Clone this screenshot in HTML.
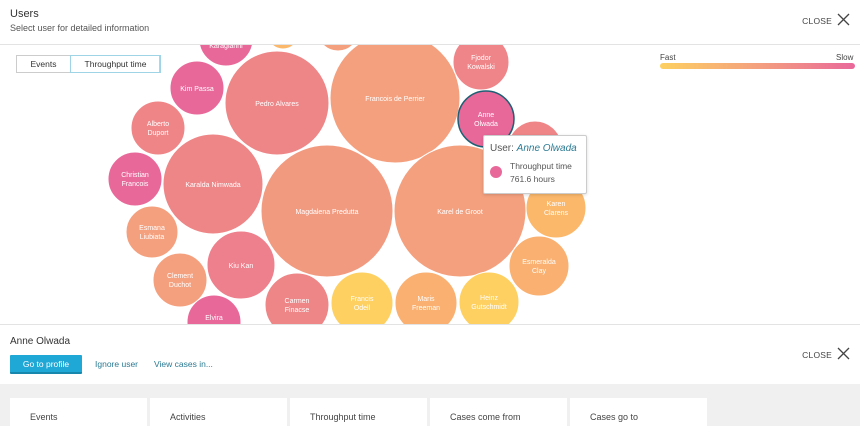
<!DOCTYPE html>
<html><head><style>
*{margin:0;padding:0;box-sizing:border-box}
body{width:860px;height:426px;overflow:hidden;background:#fff;font-family:"Liberation Sans",sans-serif;position:relative}
.abs{position:absolute}
.close{font-size:8.5px;color:#444;letter-spacing:.2px;width:40px;text-align:right}
.card{position:absolute;top:398px;width:137px;height:30px;background:#fff;font-size:9px;color:#444;padding:14px 0 0 20px}
</style></head><body>
<div class="abs" style="left:10px;top:8px;font-size:11px;color:#333">Users</div>
<div class="abs" style="left:10px;top:23px;font-size:9px;color:#555">Select user for detailed information</div>
<div class="abs close" style="left:792px;top:16px">CLOSE</div>
<svg class="abs" style="left:837px;top:13px" width="13" height="13"><path d="M1 1L12 12M12 1L1 12" stroke="#444" stroke-width="1.3"/></svg>
<div class="abs" style="left:0;top:44px;width:860px;height:1px;background:#e3e3e3"></div>

<svg class="abs" style="left:0;top:45px" width="860" height="279" viewBox="0 45 860 279" font-family="Liberation Sans, sans-serif" font-size="7" fill="#fff" text-anchor="middle">
<g stroke="#fff" stroke-width="1">
<circle cx="226" cy="39" r="27" fill="#e9689a"/>
<circle cx="283" cy="33" r="16" fill="#fbb86b"/>
<circle cx="338" cy="30" r="21" fill="#f4a07e"/>
<circle cx="443" cy="30" r="15" fill="#ee7f8c"/>
<circle cx="197" cy="88" r="27" fill="#e9689a"/>
<circle cx="277" cy="103" r="52" fill="#ee8587"/>
<circle cx="395" cy="98" r="65" fill="#f4a07e"/>
<circle cx="481" cy="62" r="28" fill="#ef8589"/>
<circle cx="158" cy="128" r="27" fill="#ef8587"/>
<circle cx="135" cy="179" r="27" fill="#e9689a"/>
<circle cx="213" cy="184" r="50" fill="#ee8587"/>
<circle cx="535" cy="148" r="27" fill="#ef8587"/>
<circle cx="327" cy="211" r="66" fill="#f29a80"/>
<circle cx="460" cy="211" r="66" fill="#f4a07e"/>
<circle cx="556" cy="208" r="30" fill="#fbb86b"/>
<circle cx="539" cy="266" r="30" fill="#f9b070"/>
<circle cx="152" cy="232" r="26" fill="#f4a07e"/>
<circle cx="241" cy="265" r="34" fill="#ee7f8c"/>
<circle cx="180" cy="280" r="27" fill="#f4a07e"/>
<circle cx="297" cy="305" r="32" fill="#ee8587"/>
<circle cx="362" cy="303" r="31" fill="#fdd061"/>
<circle cx="426" cy="303" r="31" fill="#f9b070"/>
<circle cx="489" cy="302" r="30" fill="#fdd061"/>
<circle cx="214" cy="322" r="27" fill="#e9689a"/>
</g>
<circle cx="486" cy="119" r="28" fill="#e9689a" stroke="#1e5f74" stroke-width="1.5"/>
<text x="226" y="48">Karagianni</text>
<text x="197" y="91">Kim Passa</text>
<text x="277" y="106">Pedro Alvares</text>
<text x="395" y="101">Francois de Perrier</text>
<text x="481" y="60">Fjodor</text><text x="481" y="69">Kowalski</text>
<text x="486" y="117">Anne</text><text x="486" y="126">Olwada</text>
<text x="158" y="126">Alberto</text><text x="158" y="135">Duport</text>
<text x="135" y="177">Christian</text><text x="135" y="186">Francois</text>
<text x="213" y="187">Karalda Nimwada</text>
<text x="327" y="214">Magdalena Predutta</text>
<text x="460" y="214">Karel de Groot</text>
<text x="556" y="206">Karen</text><text x="556" y="215">Clarens</text>
<text x="539" y="264">Esmeralda</text><text x="539" y="273">Clay</text>
<text x="152" y="230">Esmana</text><text x="152" y="239">Liubiata</text>
<text x="241" y="268">Kiu Kan</text>
<text x="180" y="278">Clement</text><text x="180" y="287">Duchot</text>
<text x="297" y="303">Carmen</text><text x="297" y="312">Finacse</text>
<text x="362" y="301">Francis</text><text x="362" y="310">Odell</text>
<text x="426" y="301">Maris</text><text x="426" y="310">Freeman</text>
<text x="489" y="300">Heinz</text><text x="489" y="309">Gutschmidt</text>
<text x="214" y="320">Elvira</text>
</svg>

<div class="abs" style="left:16px;top:55px;width:144px;height:18px;border:1px solid #ccc;font-size:8.5px;color:#333">
<div class="abs" style="left:0;top:0;width:53px;height:16px;text-align:center;line-height:16px">Events</div>
<div class="abs" style="left:53px;top:-1px;width:91px;height:18px;border:1px solid #9fd3e6;text-align:center;line-height:16px">Throughput time</div>
</div>

<div class="abs" style="left:660px;top:53px;font-size:8px;color:#444">Fast</div>
<div class="abs" style="left:836px;top:53px;font-size:8px;color:#444">Slow</div>
<div class="abs" style="left:660px;top:63px;width:195px;height:6px;border-radius:3px;background:linear-gradient(90deg,#fdd061,#f4a07e 50%,#e9689a)"></div>

<div class="abs" style="left:483px;top:135px;width:104px;height:59px;background:#fff;border:1px solid #ccc;border-radius:2px;box-shadow:0 1px 3px rgba(0,0,0,.15)">
<div class="abs" style="left:6px;top:7px;font-size:10px;color:#555">User: <i style="color:#2b7a93">Anne Olwada</i></div>
<div class="abs" style="left:6px;top:30px;width:12px;height:12px;border-radius:50%;background:#e9689a"></div>
<div class="abs" style="left:26px;top:24px;font-size:8.5px;color:#555;line-height:13px">Throughput time<br>761.6 hours</div>
</div>

<div class="abs" style="left:0;top:324px;width:860px;height:1px;background:#e3e3e3"></div>
<div class="abs" style="left:10px;top:336px;font-size:10px;color:#333">Anne Olwada</div>
<div class="abs" style="left:10px;top:355px;width:72px;height:19px;background:#1fa7d6;border-bottom:2px solid #1787ae;color:#fff;font-size:8.5px;text-align:center;line-height:18px;border-radius:1px">Go to profile</div>
<div class="abs" style="left:95px;top:359px;font-size:8.5px;color:#2b7a93">Ignore user</div>
<div class="abs" style="left:154px;top:359px;font-size:8.5px;color:#2b7a93">View cases in...</div>
<div class="abs close" style="left:792px;top:350px">CLOSE</div>
<svg class="abs" style="left:837px;top:347px" width="13" height="13"><path d="M1 1L12 12M12 1L1 12" stroke="#444" stroke-width="1.3"/></svg>

<div class="abs" style="left:0;top:384px;width:860px;height:42px;background:#f0f0f0"></div>
<div class="card" style="left:10px">Events</div>
<div class="card" style="left:150px">Activities</div>
<div class="card" style="left:290px">Throughput time</div>
<div class="card" style="left:430px">Cases come from</div>
<div class="card" style="left:570px">Cases go to</div>
</body></html>
